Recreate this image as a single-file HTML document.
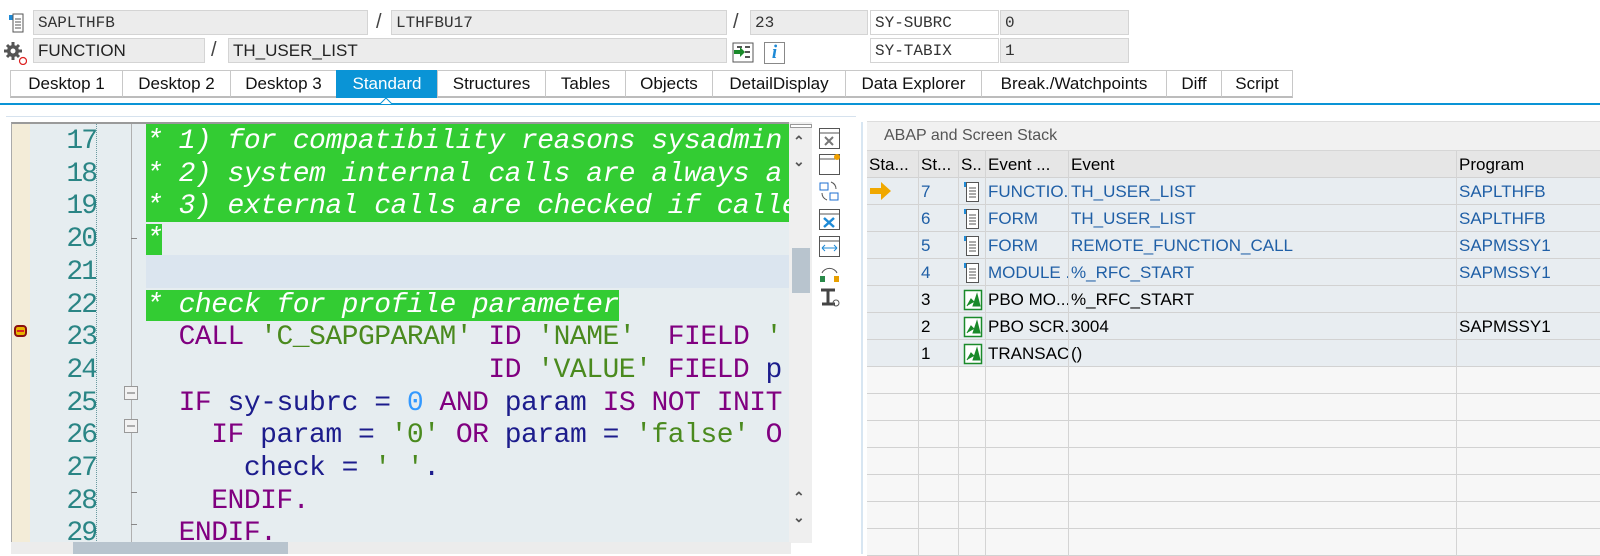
<!DOCTYPE html>
<html><head><meta charset="utf-8"><style>
*{margin:0;padding:0;box-sizing:border-box}
body{width:1600px;height:554px;overflow:hidden;background:#fff;font-family:"Liberation Sans",sans-serif;position:relative}
.a{position:absolute}
.f{position:absolute;background:#ececec;border:1px solid #d4d4d4;font:16px "Liberation Mono",monospace;color:#333;padding:3px 0 0 4px;height:25px;white-space:nowrap;overflow:hidden}
.fs{font:17px "Liberation Sans",sans-serif;color:#222;padding-top:2px}
.w{background:#fff}
.sl{position:absolute;font:20px "Liberation Sans",sans-serif;color:#444}
.tab{position:absolute;top:70px;height:28px;border:1px solid #c8c8c8;border-bottom:2px solid #bcbcbc;background:#fff;font-size:17px;color:#111;text-align:center;line-height:25px}
.code{position:absolute;left:146px;width:643px;height:33px;font:28px "Liberation Mono",monospace;letter-spacing:-0.5px;line-height:35px;white-space:pre;overflow:hidden}
.cm{color:#fff;font-style:italic;background:#33cc33}
.k{color:#800080}.i{color:#1c1c8c}.s{color:#4a8a1e}.n{color:#3399ff}
.ln{position:absolute;left:30px;width:66px;text-align:right;font:28px "Liberation Mono",monospace;letter-spacing:-2px;color:#2a8585;line-height:35px;height:33px;overflow:hidden}
.row{position:absolute;left:867px;width:733px;height:27px;border-bottom:1px solid #d2d2d2;background:#e8edf1;font-size:17px}
.row.e{background:#f7f7f7}
.c{position:absolute;top:0;height:27px;line-height:27px;white-space:nowrap;overflow:hidden;border-left:1px solid #d4d4d4;padding-left:2px}
.b{color:#1f5fa6}
</style></head><body>

<svg class="a" style="left:8px;top:13px" width="16" height="20"><path d="M1 2h5v5H1z" fill="#1e8ad6"/><rect x="5" y="1" width="10" height="18" fill="#fff" stroke="#555"/><path d="M7 6h6M7 9h6M7 12h6M7 15h6" stroke="#555"/></svg>
<div class="f" style="left:33px;top:10px;width:335px">SAPLTHFB</div>
<div class="sl" style="left:376px;top:11px">/</div>
<div class="f" style="left:391px;top:10px;width:336px">LTHFBU17</div>
<div class="sl" style="left:733px;top:11px">/</div>
<div class="f" style="left:750px;top:10px;width:118px">23</div>
<div class="f w" style="left:870px;top:10px;width:129px">SY-SUBRC</div>
<div class="f" style="left:1000px;top:10px;width:129px">0</div>
<svg class="a" style="left:3px;top:41px" width="24" height="24"><circle cx="10" cy="10" r="6" fill="#555"/><path d="M10 1v18M1 10h18M4 4l12 12M16 4L4 16" stroke="#555" stroke-width="3"/><circle cx="10" cy="10" r="2.5" fill="#fff"/><circle cx="20" cy="20" r="3.5" fill="#fff" stroke="#d22" stroke-width="1.2"/></svg>
<div class="f fs" style="left:33px;top:38px;width:172px">FUNCTION</div>
<div class="sl" style="left:211px;top:39px">/</div>
<div class="f fs" style="left:228px;top:38px;width:499px">TH_USER_LIST</div>
<svg class="a" style="left:732px;top:42px" width="22" height="21"><rect x="1" y="1" width="20" height="19" fill="#fff" stroke="#555"/><path d="M5 5h5M13 5h5M13 10h5M13 15h5" stroke="#555" stroke-width="2"/><path d="M2 8h6V5l5 5-5 5v-3H2z" fill="#1a8a2a"/></svg>
<div class="a" style="left:764px;top:42px;width:21px;height:22px;border:1px solid #888;color:#1e8ad6;font:italic bold 19px 'Liberation Serif',serif;text-align:center;line-height:20px">i</div>
<div class="f w" style="left:870px;top:38px;width:129px">SY-TABIX</div>
<div class="f" style="left:1000px;top:38px;width:129px">1</div>

<div class="tab" style="left:10px;width:113px">Desktop 1</div>
<div class="tab" style="left:122px;width:109px">Desktop 2</div>
<div class="tab" style="left:230px;width:107px">Desktop 3</div>
<div class="tab" style="left:336px;width:102px;background:#0a94d6;color:#fff;border-color:#0a94d6">Standard</div>
<div class="tab" style="left:437px;width:109px">Structures</div>
<div class="tab" style="left:545px;width:81px">Tables</div>
<div class="tab" style="left:625px;width:88px">Objects</div>
<div class="tab" style="left:712px;width:134px">DetailDisplay</div>
<div class="tab" style="left:845px;width:137px">Data Explorer</div>
<div class="tab" style="left:981px;width:186px">Break./Watchpoints</div>
<div class="tab" style="left:1166px;width:56px">Diff</div>
<div class="tab" style="left:1221px;width:72px">Script</div>
<div class="a" style="left:0;top:103px;width:1600px;height:2px;background:#0a94d6"></div>
<svg class="a" style="left:380px;top:98px" width="12" height="7"><path d="M0 6L6 0L12 6" fill="#fff" stroke="#0a94d6"/></svg>

<div class="a" style="left:6px;top:116px;width:850px;height:1px;background:#d6e2ee"></div>
<div class="a" style="left:11px;top:122px;width:779px;height:421px;background:#e6edf0;border-top:2px solid #9a9a9a;border-left:1px solid #aaa"></div>
<div class="a" style="left:12px;top:124px;width:18px;height:419px;background:#f3ecd8"></div>
<div class="a" style="left:96px;top:124px;width:0;height:419px;border-left:1px dotted #6a9aa0"></div>
<div class="a" style="left:131px;top:124px;width:1px;height:419px;background:#b0b0b0"></div>
<div class="a" style="left:146px;top:255px;width:643px;height:33px;background:#dbe5ef"></div>
<svg class="a" style="left:14px;top:324px" width="14" height="14"><rect x="1" y="2" width="11" height="10" rx="3" fill="#e8b400" stroke="#8a1010" stroke-width="2"/><rect x="3" y="6" width="7" height="2" fill="#d22"/></svg>
<svg class="a" style="left:124px;top:386px" width="15" height="80"><rect x="0.5" y="0.5" width="13" height="13" fill="#f2f2f2" stroke="#999"/><path d="M3 7h8" stroke="#666"/><rect x="0.5" y="33.5" width="13" height="13" fill="#f2f2f2" stroke="#999"/><path d="M3 40h8" stroke="#666"/></svg>
<div class="a" style="left:131px;top:238px;width:6px;height:1px;background:#888"></div>
<div class="a" style="left:131px;top:492px;width:6px;height:1px;background:#888"></div>
<div class="a" style="left:131px;top:524px;width:6px;height:1px;background:#888"></div>

<div class="ln" style="top:124px">17</div>
<div class="ln" style="top:157px">18</div>
<div class="ln" style="top:189px">19</div>
<div class="ln" style="top:222px">20</div>
<div class="ln" style="top:255px">21</div>
<div class="ln" style="top:288px">22</div>
<div class="ln" style="top:320px">23</div>
<div class="ln" style="top:353px">24</div>
<div class="ln" style="top:386px">25</div>
<div class="ln" style="top:418px">26</div>
<div class="ln" style="top:451px">27</div>
<div class="ln" style="top:484px">28</div>
<div class="ln" style="top:516px;height:26px">29</div>

<div class="code cm" style="top:124px">* 1) for compatibility reasons sysadmin</div>
<div class="code cm" style="top:157px">* 2) system internal calls are always a</div>
<div class="code cm" style="top:189px">* 3) external calls are checked if calle</div>
<div class="code" style="top:222px"><span class="cm">*</span></div>
<div class="code" style="top:288px"><span class="cm">* check for profile parameter</span></div>
<div class="code" style="top:320px">  <span class="k">CALL</span> <span class="s">'C_SAPGPARAM'</span> <span class="k">ID</span> <span class="s">'NAME'</span>  <span class="k">FIELD</span> <span class="s">'</span></div>
<div class="code" style="top:353px">                     <span class="k">ID</span> <span class="s">'VALUE'</span> <span class="k">FIELD</span> <span class="i">p</span></div>
<div class="code" style="top:386px">  <span class="k">IF</span> <span class="i">sy-subrc</span> <span class="i">=</span> <span class="n">0</span> <span class="k">AND</span> <span class="i">param</span> <span class="k">IS NOT INIT</span></div>
<div class="code" style="top:418px">    <span class="k">IF</span> <span class="i">param</span> <span class="i">=</span> <span class="s">'0'</span> <span class="k">OR</span> <span class="i">param</span> <span class="i">=</span> <span class="s">'false'</span> <span class="k">O</span></div>
<div class="code" style="top:451px">      <span class="i">check</span> <span class="i">=</span> <span class="s">' '</span><span class="i">.</span></div>
<div class="code" style="top:484px">    <span class="k">ENDIF.</span></div>
<div class="code" style="top:516px;height:26px">  <span class="k">ENDIF.</span></div>

<div class="a" style="left:789px;top:122px;width:23px;height:421px;background:#efefef"></div>
<div class="a" style="left:790px;top:124px;width:22px;height:4px;border:1px solid #999;background:#fff"></div>
<div class="a" style="left:792px;top:248px;width:18px;height:45px;background:#b8c4ce"></div>
<div class="a" style="left:793px;top:131px;color:#555;font:bold 14px 'Liberation Sans';line-height:20px">&#8963;<br>&#8964;</div>
<div class="a" style="left:793px;top:487px;color:#555;font:bold 14px 'Liberation Sans';line-height:20px">&#8963;<br>&#8964;</div>
<div class="a" style="left:11px;top:542px;width:780px;height:12px;background:#ececec"></div>
<div class="a" style="left:73px;top:542px;width:215px;height:12px;background:#b8c4ce"></div>

<svg class="a" style="left:817px;top:126px" width="24" height="185" fill="none" stroke="#555">
<rect x="2.5" y="2.5" width="20" height="20"/><path d="M2 7h21"/><path d="M8 11l8 8M16 11l-8 8" stroke="#777" stroke-width="2"/>
<rect x="2.5" y="28.5" width="20" height="20"/><path d="M2 33h21"/><circle cx="20" cy="31" r="3" fill="#f0a000" stroke="none"/>
<rect x="3" y="57" width="8" height="7" stroke="#1e6fd0"/><rect x="13" y="67" width="8" height="7" stroke="#1e6fd0"/><path d="M14 56q5 2 5 7M10 74q-5-2-5-7" />
<rect x="2.5" y="83.5" width="20" height="20"/><path d="M2 88h21"/><path d="M7 92l10 9M17 92l-10 9" stroke="#1e8ad6" stroke-width="2.5"/>
<rect x="2.5" y="110.5" width="20" height="20"/><path d="M2 115h21"/><path d="M5 122h15M5 122l3-3M5 122l3 3M20 122l-3-3M20 122l-3 3" stroke="#1e8ad6"/>
<path d="M5 147a8 7 0 0 1 15 0"/><rect x="3" y="150" width="5" height="6" fill="#2a8a4a" stroke="none"/><rect x="17" y="150" width="5" height="6" fill="#e8a000" stroke="none"/>
<path d="M4 164h14M11 164v14M5 178h13" stroke="#444" stroke-width="3"/><circle cx="19" cy="177" r="3"/>
</svg>

<div class="a" style="left:861px;top:122px;width:2px;height:432px;background:#d8e6f2"></div>
<div class="a" style="left:867px;top:121px;width:733px;height:433px;background:#f7f7f7;border-top:1px solid #ddd"></div>
<div class="a" style="left:867px;top:122px;width:733px;height:30px;background:#f1f1f1;font-size:16px;color:#555;padding:5px 0 0 17px">ABAP and Screen Stack</div>
<div class="row" style="top:150px;height:28px;background:#e6e6e6;border-top:1px solid #d6d6d6"><div class="c" style="left:0;width:51px;border:0">Sta...</div><div class="c" style="left:51px;width:40px">St...</div><div class="c" style="left:91px;width:27px">S..</div><div class="c" style="left:118px;width:83px">Event ...</div><div class="c" style="left:201px;width:388px">Event</div><div class="c" style="left:589px;width:144px">Program</div></div>

<div class="row" style="top:178px"><div class="c" style="left:0;width:51px;border:0"><svg width="24" height="26"><path d="M1 10h11V4l10 9-10 9v-6H1z" fill="#f0a800"/></svg></div><div class="c b" style="left:51px;width:40px">7</div><div class="c" style="left:91px;width:27px"><svg width="22" height="26"><path d="M3 4h5v5H3z" fill="#1e8ad6"/><rect x="5.5" y="4.5" width="12" height="19" fill="#fff" stroke="#555"/><path d="M8 10h7M8 13h7M8 16h7M8 19h7" stroke="#555"/></svg></div><div class="c b" style="left:118px;width:83px">FUNCTIO...</div><div class="c b" style="left:201px;width:388px">TH_USER_LIST</div><div class="c b" style="left:589px;width:144px">SAPLTHFB</div></div>
<div class="row" style="top:205px"><div class="c" style="left:0;width:51px;border:0"></div><div class="c b" style="left:51px;width:40px">6</div><div class="c" style="left:91px;width:27px"><svg width="22" height="26"><path d="M3 4h5v5H3z" fill="#1e8ad6"/><rect x="5.5" y="4.5" width="12" height="19" fill="#fff" stroke="#555"/><path d="M8 10h7M8 13h7M8 16h7M8 19h7" stroke="#555"/></svg></div><div class="c b" style="left:118px;width:83px">FORM</div><div class="c b" style="left:201px;width:388px">TH_USER_LIST</div><div class="c b" style="left:589px;width:144px">SAPLTHFB</div></div>
<div class="row" style="top:232px"><div class="c" style="left:0;width:51px;border:0"></div><div class="c b" style="left:51px;width:40px">5</div><div class="c" style="left:91px;width:27px"><svg width="22" height="26"><path d="M3 4h5v5H3z" fill="#1e8ad6"/><rect x="5.5" y="4.5" width="12" height="19" fill="#fff" stroke="#555"/><path d="M8 10h7M8 13h7M8 16h7M8 19h7" stroke="#555"/></svg></div><div class="c b" style="left:118px;width:83px">FORM</div><div class="c b" style="left:201px;width:388px">REMOTE_FUNCTION_CALL</div><div class="c b" style="left:589px;width:144px">SAPMSSY1</div></div>
<div class="row" style="top:259px"><div class="c" style="left:0;width:51px;border:0"></div><div class="c b" style="left:51px;width:40px">4</div><div class="c" style="left:91px;width:27px"><svg width="22" height="26"><path d="M3 4h5v5H3z" fill="#1e8ad6"/><rect x="5.5" y="4.5" width="12" height="19" fill="#fff" stroke="#555"/><path d="M8 10h7M8 13h7M8 16h7M8 19h7" stroke="#555"/></svg></div><div class="c b" style="left:118px;width:83px">MODULE ...</div><div class="c b" style="left:201px;width:388px">%_RFC_START</div><div class="c b" style="left:589px;width:144px">SAPMSSY1</div></div>
<div class="row" style="top:286px"><div class="c" style="left:0;width:51px;border:0"></div><div class="c" style="left:51px;width:40px">3</div><div class="c" style="left:91px;width:27px"><svg width="22" height="26"><rect x="3.5" y="4.5" width="17" height="19" fill="#fff" stroke="#1a8a2a" stroke-width="1.5"/><path d="M6 20l4-7 3 3M12 20l4-12 3 12z" stroke="#1a8a2a" fill="#1a8a2a"/></svg></div><div class="c" style="left:118px;width:83px">PBO MO...</div><div class="c" style="left:201px;width:388px">%_RFC_START</div><div class="c" style="left:589px;width:144px"></div></div>
<div class="row" style="top:313px"><div class="c" style="left:0;width:51px;border:0"></div><div class="c" style="left:51px;width:40px">2</div><div class="c" style="left:91px;width:27px"><svg width="22" height="26"><rect x="3.5" y="4.5" width="17" height="19" fill="#fff" stroke="#1a8a2a" stroke-width="1.5"/><path d="M6 20l4-7 3 3M12 20l4-12 3 12z" stroke="#1a8a2a" fill="#1a8a2a"/></svg></div><div class="c" style="left:118px;width:83px">PBO SCR...</div><div class="c" style="left:201px;width:388px">3004</div><div class="c" style="left:589px;width:144px">SAPMSSY1</div></div>
<div class="row" style="top:340px"><div class="c" style="left:0;width:51px;border:0"></div><div class="c" style="left:51px;width:40px">1</div><div class="c" style="left:91px;width:27px"><svg width="22" height="26"><rect x="3.5" y="4.5" width="17" height="19" fill="#fff" stroke="#1a8a2a" stroke-width="1.5"/><path d="M6 20l4-7 3 3M12 20l4-12 3 12z" stroke="#1a8a2a" fill="#1a8a2a"/></svg></div><div class="c" style="left:118px;width:83px">TRANSAC...</div><div class="c" style="left:201px;width:388px">()</div><div class="c" style="left:589px;width:144px"></div></div>
<div class="row e" style="top:367px"><div class="c" style="left:51px;width:40px"></div><div class="c" style="left:91px;width:27px"></div><div class="c" style="left:118px;width:83px"></div><div class="c" style="left:201px;width:388px"></div><div class="c" style="left:589px;width:144px"></div></div>
<div class="row e" style="top:394px"><div class="c" style="left:51px;width:40px"></div><div class="c" style="left:91px;width:27px"></div><div class="c" style="left:118px;width:83px"></div><div class="c" style="left:201px;width:388px"></div><div class="c" style="left:589px;width:144px"></div></div>
<div class="row e" style="top:421px"><div class="c" style="left:51px;width:40px"></div><div class="c" style="left:91px;width:27px"></div><div class="c" style="left:118px;width:83px"></div><div class="c" style="left:201px;width:388px"></div><div class="c" style="left:589px;width:144px"></div></div>
<div class="row e" style="top:448px"><div class="c" style="left:51px;width:40px"></div><div class="c" style="left:91px;width:27px"></div><div class="c" style="left:118px;width:83px"></div><div class="c" style="left:201px;width:388px"></div><div class="c" style="left:589px;width:144px"></div></div>
<div class="row e" style="top:475px"><div class="c" style="left:51px;width:40px"></div><div class="c" style="left:91px;width:27px"></div><div class="c" style="left:118px;width:83px"></div><div class="c" style="left:201px;width:388px"></div><div class="c" style="left:589px;width:144px"></div></div>
<div class="row e" style="top:502px"><div class="c" style="left:51px;width:40px"></div><div class="c" style="left:91px;width:27px"></div><div class="c" style="left:118px;width:83px"></div><div class="c" style="left:201px;width:388px"></div><div class="c" style="left:589px;width:144px"></div></div>
<div class="row e" style="top:529px"><div class="c" style="left:51px;width:40px"></div><div class="c" style="left:91px;width:27px"></div><div class="c" style="left:118px;width:83px"></div><div class="c" style="left:201px;width:388px"></div><div class="c" style="left:589px;width:144px"></div></div>
</body></html>
